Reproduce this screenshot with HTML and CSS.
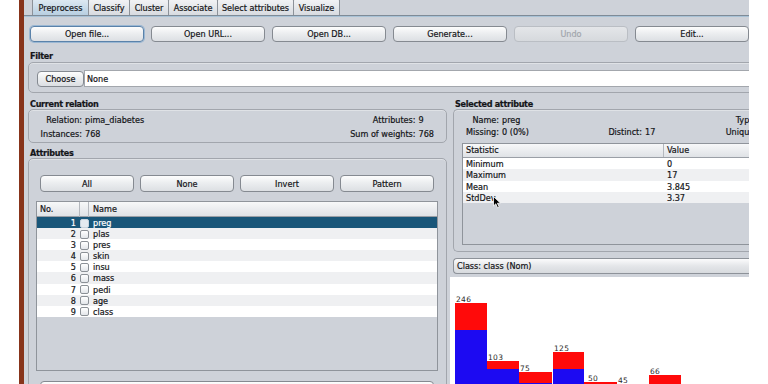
FILE: index.html
```html
<!DOCTYPE html>
<html>
<head>
<meta charset="utf-8">
<title>Weka Explorer</title>
<link rel="stylesheet" href="styles.css">
</head>
<body>
<div class="window">
  <div class="frame">
    <div class="tabs">
      <div class="tab active t1">Preprocess</div>
      <div class="tab t2">Classify</div>
      <div class="tab t3">Cluster</div>
      <div class="tab t4">Associate</div>
      <div class="tab t5">Select attributes</div>
      <div class="tab t6">Visualize</div>
    </div>

    <div class="toolbar">
      <div class="btn wide focus">Open file...</div>
      <div class="btn wide">Open URL...</div>
      <div class="btn wide">Open DB...</div>
      <div class="btn wide">Generate...</div>
      <div class="btn wide disabled">Undo</div>
      <div class="btn wide">Edit...</div>
    </div>

    <div class="gtitle first">Filter</div>
    <div class="box filter-box">
      <div class="btn choose">Choose</div>
      <div class="field">None</div>
    </div>

    <div class="columns">
      <div class="col-left">
        <div class="gtitle">Current relation</div>
        <div class="box relation">
          <div class="kv kv-left">
            <span class="k">Relation:</span><span class="v">pima_diabetes</span>
            <span class="k">Instances:</span><span class="v">768</span>
          </div>
          <div class="kv kv-right">
            <span class="k">Attributes:</span><span class="v">9</span>
            <span class="k">Sum of weights:</span><span class="v">768</span>
          </div>
        </div>

        <div class="gtitle">Attributes</div>
        <div class="box attributes">
          <div class="btn-row">
            <div class="btn">All</div>
            <div class="btn">None</div>
            <div class="btn">Invert</div>
            <div class="btn">Pattern</div>
          </div>
          <div class="table attr-table">
            <div class="thead attr-grid">
              <div class="th">No.</div>
              <div class="th"></div>
              <div class="th">Name</div>
            </div>
            <div class="tr attr-grid selected"><div class="num">1</div><div class="chk"><span class="cb"></span></div><div class="nm">preg</div></div>
            <div class="tr attr-grid"><div class="num">2</div><div class="chk"><span class="cb"></span></div><div class="nm">plas</div></div>
            <div class="tr attr-grid"><div class="num">3</div><div class="chk"><span class="cb"></span></div><div class="nm">pres</div></div>
            <div class="tr attr-grid"><div class="num">4</div><div class="chk"><span class="cb"></span></div><div class="nm">skin</div></div>
            <div class="tr attr-grid"><div class="num">5</div><div class="chk"><span class="cb"></span></div><div class="nm">insu</div></div>
            <div class="tr attr-grid"><div class="num">6</div><div class="chk"><span class="cb"></span></div><div class="nm">mass</div></div>
            <div class="tr attr-grid"><div class="num">7</div><div class="chk"><span class="cb"></span></div><div class="nm">pedi</div></div>
            <div class="tr attr-grid"><div class="num">8</div><div class="chk"><span class="cb"></span></div><div class="nm">age</div></div>
            <div class="tr attr-grid"><div class="num">9</div><div class="chk"><span class="cb"></span></div><div class="nm">class</div></div>
          </div>
          <div class="btn remove"></div>
        </div>
      </div>

      <div class="col-right">
        <div class="gtitle">Selected attribute</div>
        <div class="box selected-attr">
          <div class="info">
            <span class="k">Name:</span><span class="v">preg</span>
            <span class="k"></span><span class="v"></span>
            <span class="k">Type:</span><span class="v">Numeric</span>
            <span class="k">Missing:</span><span class="v">0 (0%)</span>
            <span class="k">Distinct:</span><span class="v">17</span>
            <span class="k">Unique:</span><span class="v">2 (0%)</span>
          </div>
          <div class="table stats-table">
            <div class="thead stats-grid">
              <div class="th">Statistic</div>
              <div class="th">Value</div>
            </div>
            <div class="tr stats-grid"><div class="cell">Minimum</div><div class="cell">0</div></div>
            <div class="tr stats-grid"><div class="cell">Maximum</div><div class="cell">17</div></div>
            <div class="tr stats-grid"><div class="cell">Mean</div><div class="cell">3.845</div></div>
            <div class="tr stats-grid"><div class="cell">StdDev</div><div class="cell">3.37</div></div>
            <svg class="cursor" width="9" height="13" viewBox="0 0 9 13">
              <path d="M0.5 0.5 L0.5 10 L2.8 7.8 L4.6 11.8 L6.2 11.1 L4.4 7.2 L7.5 7.2 Z" fill="#000" stroke="#fff" stroke-width="0.8"/>
            </svg>
          </div>
        </div>
        <div class="combo">Class: class (Nom)</div>
        <div class="histogram">
          <div class="bar w32"><span class="lbl">246</span><div class="red" style="height:27px"></div><div class="blue" style="height:67px"></div></div>
          <div class="bar w32"><span class="lbl">103</span><div class="red" style="height:8px"></div><div class="blue" style="height:28px"></div></div>
          <div class="bar w33"><span class="lbl">75</span><div class="red" style="height:11px"></div><div class="blue" style="height:14px"></div></div>
          <div class="bar w31 gap"><span class="lbl">125</span><div class="red" style="height:17px"></div><div class="blue" style="height:28px"></div></div>
          <div class="bar w33"><span class="lbl shift">50</span><div class="red" style="height:8px"></div><div class="blue" style="height:7px"></div></div>
          <div class="bar w32"><span class="lbl">45</span><div class="red" style="height:7px"></div><div class="blue" style="height:6px"></div></div>
          <div class="bar w32"><span class="lbl">66</span><div class="red" style="height:12px"></div><div class="blue" style="height:10px"></div></div>
        </div>
      </div>
    </div>
  </div>
</div>
</body>
</html>
```

FILE: styles.css
```css
* { box-sizing: border-box; }

html, body {
  margin: 0;
  padding: 0;
  background: #ffffff;
}

body {
  width: 768px;
  height: 384px;
  overflow: hidden;
  font-family: "DejaVu Sans Condensed", "DejaVu Sans", sans-serif;
  font-stretch: condensed;
  font-size: 9px;
  color: #141518;
  -webkit-text-stroke: 0.2px currentColor;
}

.window {
  margin-left: 19px;
  width: 730px;
  height: 384px;
  border-left: 5px solid #87341a;
  background: #ced2d9;
  overflow: hidden;
}

.frame {
  width: 830px;
}

/* Tabs */
.tabs {
  display: flex;
  height: 16px;
  padding-left: 8px;
  border-bottom: 1px solid #7f8b97;
  box-shadow: 0 1px 0 #a8c2d6;
}

.tab {
  height: 17px;
  margin-top: -2px;
  border: 1px solid #8d9299;
  border-bottom: none;
  border-radius: 3px 3px 0 0;
  background: linear-gradient(#f3f4f6, #d8dbe0);
  padding-top: 2px;
  line-height: 14px;
  text-align: center;
  white-space: nowrap;
  margin-right: -1px;
}
.tab.active { background: linear-gradient(#dfeaf3, #b8cfe1); }
.t1 { width: 57px; }
.t2 { width: 42px; }
.t3 { width: 40px; }
.t4 { width: 50px; }
.t5 { width: 77px; }
.t6 { width: 47px; }

/* Buttons */
.btn {
  height: 16px;
  border: 1px solid #858a91;
  border-radius: 4px;
  background: linear-gradient(#fdfdfd, #eceef0 45%, #dcdfe3);
  display: flex;
  align-items: center;
  justify-content: center;
  white-space: nowrap;
}
.btn.focus {
  border-color: #5a82aa;
  box-shadow: 0 0 0 1px #9ab7d3;
}
.btn.disabled {
  color: #a2a6ac;
  border-color: #babec4;
  background: linear-gradient(#e4e6e9, #d6d9dd);
}

.toolbar {
  display: flex;
  gap: 7px;
  margin: 10px 0 0 6px;
}
.btn.wide { width: 114px; }

/* Group titles / boxes */
.gtitle {
  font-weight: bold;
  letter-spacing: -0.3px;
  height: 14px;
  line-height: 18px;
  padding-left: 6px;
  margin-top: 1px;
}
.gtitle.first { margin-top: 6px; line-height: 16px; }

.box {
  border: 1px solid #a2a6ad;
  border-radius: 5px;
  box-shadow: inset 0 1px 0 #dfe2e6;
}

.filter-box {
  margin-left: 4px;
  height: 31px;
  display: flex;
  align-items: flex-start;
  padding: 7px 0 0 8px;
}
.btn.choose { width: 47px; height: 16px; margin-top: 1px; }
.field {
  flex: 1;
  height: 17px;
  background: #ffffff;
  border: 1px solid #a3a7ad;
  border-right: none;
  line-height: 17px;
  padding-left: 2px;
}

/* Columns */
.columns {
  display: grid;
  grid-template-columns: 426px 1fr;
  margin-top: 1px;
}

.relation {
  margin-left: 4px;
  width: 419px;
  height: 34px;
  display: flex;
  justify-content: space-between;
  padding: 4px 12px 0 0;
}
.kv {
  display: grid;
  grid-template-columns: auto auto;
  column-gap: 3px;
  line-height: 12px;
}
.kv .k { text-align: right; }
.kv-left { grid-template-columns: 53px auto; }

.attributes {
  margin-left: 4px;
  width: 419px;
  height: 240px;
  padding: 16px 12px 0 11px;
}
.btn-row {
  display: grid;
  grid-template-columns: repeat(4, 1fr);
  gap: 6px;
}
.btn-row .btn { height: 17px; }

.table {
  border: 1px solid #8f949b;
  background: #ced2d9;
  position: relative;
}
.attr-table {
  margin: 9px -4px 0 -4px;
  height: 170px;
}
.thead {
  height: 15px;
  background: linear-gradient(#f7f8f9, #dfe2e6);
  border-bottom: 1px solid #9a9fa6;
  line-height: 15px;
}
.th {
  border-right: 1px solid #b4b8be;
  padding-left: 3px;
}
.th:last-child { border-right: none; }
.attr-grid {
  display: grid;
  grid-template-columns: 43px 9px 1fr;
}
.attr-grid .th:nth-child(3) { padding-left: 4px; }
.tr {
  height: 11.1px;
  line-height: 12px;
  background: #ffffff;
}
.tr:nth-child(odd) { background: #eff0f2; }
.tr.selected { background: #195679; color: #ffffff; }
.num { text-align: right; padding-right: 4px; }
.chk { display: flex; align-items: center; justify-content: center; }
.cb {
  width: 9px;
  height: 9px;
  border: 1px solid #8b9096;
  border-radius: 2px;
  background: linear-gradient(#ffffff, #e3e6ea);
}
.selected .cb { border-color: #c9d4de; background: #e4eaf0; }
.nm { padding-left: 4px; }

.btn.remove { margin: 10px 0 0 0; height: 17px; }

/* Right column */
.col-right .gtitle { padding-left: 5px; }

.selected-attr {
  margin-left: 3px;
  height: 143px;
  padding: 5px 0 0 0;
  border-right: none;
  border-radius: 5px 0 0 5px;
}
.info {
  display: grid;
  grid-template-columns: 45px 103px 40px 70px 45px auto;
  line-height: 11.5px;
}
.info .k { text-align: right; }
.info .v { padding-left: 3px; }

.stats-table {
  margin: 5px 0 0 8px;
  height: 102px;
  border-right: none;
}
.stats-grid {
  display: grid;
  grid-template-columns: 201px 1fr;
}
.stats-grid .th { padding-left: 3px; }
.stats-table .thead { height: 14px; line-height: 13px; }
.stats-table .tr { height: 11.25px; }
.stats-table .tr:nth-child(even) { background: #ffffff; }
.stats-table .tr:nth-child(odd) { background: #eff0f2; }
.cell { padding-left: 3px; }

.cursor {
  position: absolute;
  left: 30px;
  top: 52px;
}

.combo {
  margin: 6px 0 0 3px;
  height: 16px;
  border: 1px solid #8d9299;
  border-right: none;
  border-radius: 4px 0 0 4px;
  background: linear-gradient(#fbfbfc, #e4e6e9 50%, #d7dade);
  line-height: 15px;
  padding-left: 3px;
}

.histogram {
  margin-top: 3px;
  height: 120px;
  background: #ffffff;
  display: flex;
  align-items: flex-end;
  padding-left: 5px;
}
.bar {
  display: flex;
  flex-direction: column;
}
.w31 { width: 31px; }
.w32 { width: 32px; }
.w33 { width: 33px; }
.bar.gap { margin-left: 1px; }
.lbl {
  font-family: "DejaVu Sans", sans-serif;
  font-stretch: normal;
  font-size: 7.5px;
  line-height: 7px;
  letter-spacing: 0.3px;
  color: #2a2a2a;
  -webkit-text-stroke: 0;
  padding-left: 1px;
}
.lbl.shift { padding-left: 4px; }
.red { background: #ff0a0a; }
.blue { background: #1c0af2; }
```
